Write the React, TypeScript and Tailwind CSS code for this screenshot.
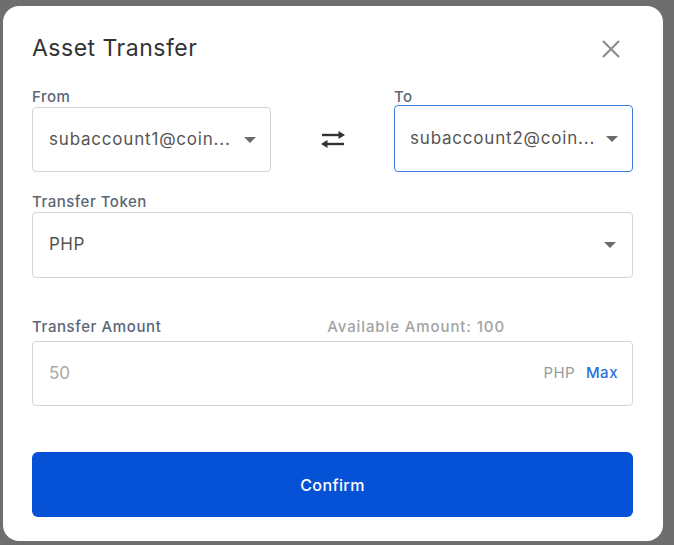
import React from "react";

function Caret() {
  return (
    <svg width="12" height="6" viewBox="0 0 12 6" className="shrink-0">
      <polygon points="0,0 12,0 6,6" fill="#6b6b6b" />
    </svg>
  );
}

function SwapIcon() {
  return (
    <svg width="24" height="19" viewBox="0 0 24 19">
      <path d="M1 5 H19" stroke="#333" strokeWidth="2.4" />
      <polygon points="17.5,1 24,5 17.5,9" fill="#333" />
      <path d="M5 14 H23" stroke="#333" strokeWidth="2.4" />
      <polygon points="6.5,10 0,14 6.5,18" fill="#333" />
    </svg>
  );
}

function CloseIcon() {
  return (
    <svg width="18" height="18" viewBox="0 0 18 18">
      <path d="M1.5 1.5 L16.5 16.5 M16.5 1.5 L1.5 16.5" stroke="#8a8a8a" strokeWidth="2" strokeLinecap="round" />
    </svg>
  );
}

export default function App() {
  return (
    <div
      className="w-[674px] h-[545px] bg-[#6e6e6e] pt-[6px] pl-[3px] overflow-hidden"
      style={{ fontFamily: "Inter, 'Noto Sans', sans-serif" }}
    >
      <div className="w-[660px] h-[535px] bg-white rounded-[16px] pl-[29px] pr-[30px] pt-[28px] flex flex-col">
        <div className="flex items-center justify-between h-[28px]">
          <h1 className="text-[23px] leading-[28px] text-[#333] font-normal tracking-[0.5px]">Asset Transfer</h1>
          <button className="mr-[13px] mt-[2px]">
            <CloseIcon />
          </button>
        </div>

        <div className="grid grid-cols-[239px_1fr_239px] mt-[24px]">
          <div className="flex flex-col">
            <div className="text-[15px] leading-[21px] text-[#5b6676] font-medium tracking-[0.5px]">From</div>
            <div className="h-[65px] border border-[#d4d4d4] rounded-[4px] flex items-center justify-between pl-[16px] pr-[14px]">
              <span className="text-[17px] text-[#555] truncate tracking-[0.8px]">subaccount1@coin...</span>
              <Caret />
            </div>
          </div>
          <div className="flex items-center justify-center pt-[21px] pl-[1px]">
            <SwapIcon />
          </div>
          <div className="flex flex-col">
            <div className="text-[15px] leading-[21px] text-[#5b6676] font-medium tracking-[0.5px]">To</div>
            <div className="h-[67px] -mt-[2px] border-[1.5px] border-[#3f7de0] rounded-[4px] flex items-center justify-between pl-[15px] pr-[14px]">
              <span className="text-[17px] text-[#555] truncate tracking-[0.8px]">subaccount2@coin...</span>
              <Caret />
            </div>
          </div>
        </div>

        <div className="flex flex-col mt-[19px]">
          <div className="text-[15px] leading-[21px] text-[#5b6676] font-medium tracking-[0.5px]">Transfer Token</div>
          <div className="h-[66px] border border-[#d4d4d4] rounded-[4px] flex items-center justify-between pl-[16px] pr-[16px]">
            <span className="text-[17px] text-[#555] tracking-[0.5px]">PHP</span>
            <Caret />
          </div>
        </div>

        <div className="flex flex-col mt-[39px]">
          <div className="flex items-center h-[21px] pr-[128px] justify-between">
            <span className="text-[15px] text-[#5b6676] font-medium tracking-[0.6px]">Transfer Amount</span>
            <span className="text-[15px] text-[#a3a3a3] font-medium tracking-[0.9px]">Available Amount: 100</span>
          </div>
          <div className="h-[65px] mt-[3px] border border-[#d4d4d4] rounded-[4px] flex items-center pl-[16px] pr-[14px]">
            <span className="text-[17px] text-[#a8a8a8] flex-1">50</span>
            <span className="text-[15px] text-[#9a9a9a] tracking-[0.4px]">PHP</span>
            <span className="text-[15px] text-[#2a6fdb] font-medium ml-[11px] tracking-[0.5px]">Max</span>
          </div>
        </div>

        <button className="mt-[46px] h-[65px] w-full bg-[#0552d6] rounded-[6px] text-white text-[16px] font-medium tracking-[0.4px]">
          Confirm
        </button>
      </div>
    </div>
  );
}
